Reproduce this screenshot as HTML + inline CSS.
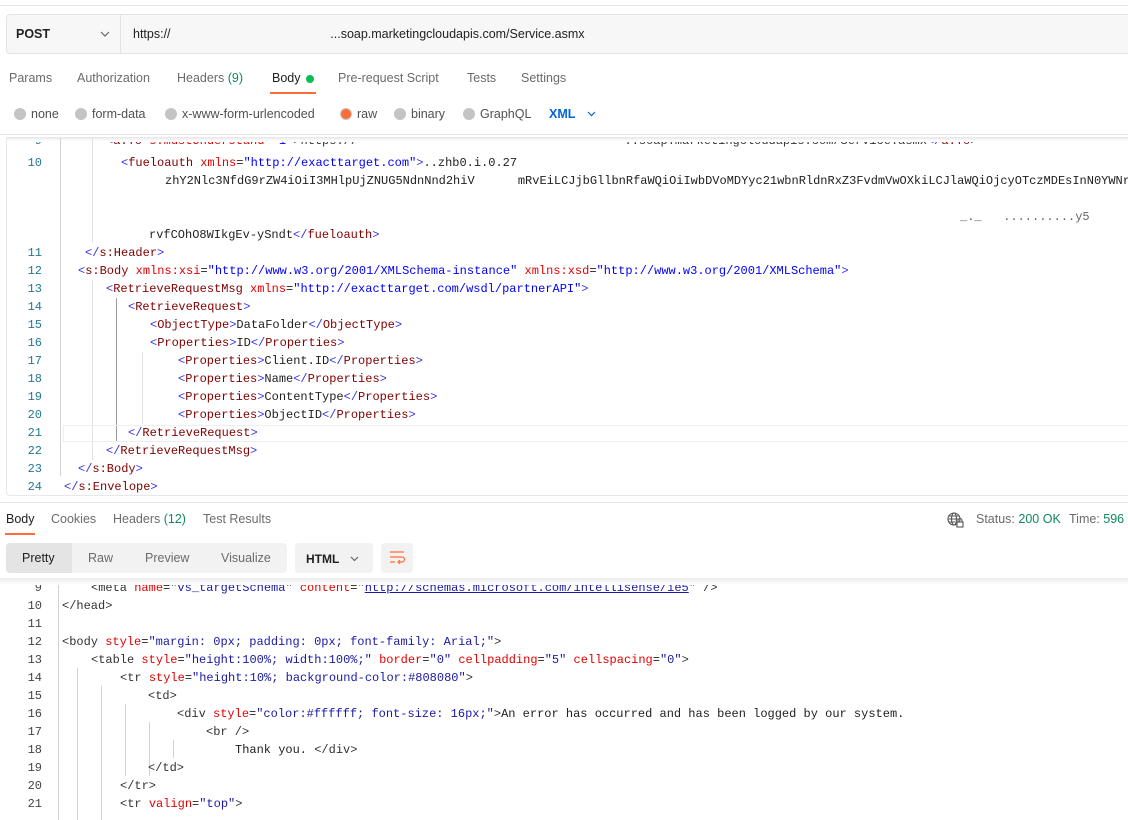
<!DOCTYPE html>
<html><head><meta charset="utf-8"><style>
*{box-sizing:border-box;margin:0;padding:0}
body{width:1128px;height:820px;overflow:hidden;background:#fff;font-family:"Liberation Sans",Arial,sans-serif;font-size:12.5px;color:#212121;position:relative}
.a{position:absolute;white-space:pre}
.m{font-family:"Liberation Mono",monospace;font-size:12px;line-height:18px}
.ln{position:absolute;width:36px;text-align:right;font-family:"Liberation Mono",monospace;font-size:12px;line-height:18px}
.rq .ln{color:#237893}
.rs .ln{color:#444}
.b{color:#3535e0}.t{color:#800000}.at{color:#e50000}.v{color:#0000ff}
.rt{color:#333}.ra{color:#e50000}.rv{color:#1a1aa6}
.tab{position:absolute;top:71px;color:#6b6b6b;font-size:12.5px}
.rad{position:absolute;top:108px;width:12px;height:12px;border-radius:50%;background:#c4c4c4}
.rl{position:absolute;top:107px;color:#505050}
.vg{position:absolute;width:1px;background:#d4d4d4}
</style></head><body>
<div class="a" style="left:0;top:5px;width:1128px;height:1px;background:#e6e6e6"></div>
<!-- URL bar -->
<div class="a" style="left:6px;top:14px;width:1122px;height:40px;background:#f7f7f7;border:1px solid #e3e3e3;border-right:none;border-radius:4px 0 0 4px"></div>
<div class="a" style="left:120px;top:15px;width:1px;height:38px;background:#e3e3e3"></div>
<div class="a" style="left:16px;top:27px;font-weight:bold;font-size:12.5px;color:#212121">POST</div>
<svg class="a" style="left:100px;top:31px" width="10" height="7" viewBox="0 0 10 7"><path d="M1 1l4 4 4-4" stroke="#666" fill="none" stroke-width="1.2"/></svg>
<div class="a" style="left:133px;top:27px;color:#212121;font-size:12.5px">https://                                              ...soap.marketingcloudapis.com/Service.asmx</div>
<!-- tabs -->
<div class="tab" style="left:9px">Params</div>
<div class="tab" style="left:77px">Authorization</div>
<div class="tab" style="left:177px">Headers <span style="color:#0f8a5a">(9)</span></div>
<div class="tab" style="left:272px;color:#212121">Body</div>
<div class="a" style="left:306px;top:75px;width:8px;height:8px;border-radius:50%;background:#0cbb52"></div>
<div class="a" style="left:270px;top:92px;width:46px;height:2px;background:#ff6c37"></div>
<div class="tab" style="left:338px">Pre-request Script</div>
<div class="tab" style="left:467px">Tests</div>
<div class="tab" style="left:521px">Settings</div>
<!-- radios -->
<div class="rad" style="left:14px"></div><div class="rl" style="left:31px">none</div>
<div class="rad" style="left:75px"></div><div class="rl" style="left:92px">form-data</div>
<div class="rad" style="left:165px"></div><div class="rl" style="left:182px">x-www-form-urlencoded</div>
<div class="rad" style="left:340px;background:#ff6c37;border:1.5px solid #c4c4c4"></div><div class="rl" style="left:357px">raw</div>
<div class="rad" style="left:394px"></div><div class="rl" style="left:411px">binary</div>
<div class="rad" style="left:463px"></div><div class="rl" style="left:480px">GraphQL</div>
<div class="rl" style="left:549px;color:#0265d2;font-weight:bold">XML</div>
<svg class="a" style="left:587px;top:111px" width="9" height="6" viewBox="0 0 9 6"><path d="M1 1l3.5 3.5 3.5-3.5" stroke="#0265d2" fill="none" stroke-width="1.2"/></svg>
<div class="a" style="left:0;top:134px;width:1128px;height:1px;background:#e8e8e8"></div>
<!-- request editor -->
<div class="rq">
<div class="ln" style="left:6px;top:132px">9</div>
<div class="a m" style="left:106px;top:132px;color:#333"><span class="b">&lt;</span><span class="t">a:To</span> <span class="at">s:mustUnderstand</span>=<span class="v">"1"</span><span class="b">&gt;</span>https://                                     ..soap.marketingcloudapis.com/Service.asmx<span class="b">&lt;/</span><span class="t">a:To</span><span class="b">&gt;</span></div>
<div class="a" style="left:0;top:135px;width:1128px;height:7px;background:#fff"></div>
<div class="a" style="left:6px;top:137px;width:1122px;height:359px;border-left:1px solid #e8e8e8;border-bottom:1px solid #e8e8e8;border-radius:0 0 0 4px;overflow:hidden">
<div class="a" style="left:0;top:0;width:1122px;height:4px;background:linear-gradient(#e6e6e6,#fff)"></div>
</div>
<div class="vg" style="left:60px;top:138px;height:338px"></div>
<div class="vg" style="left:92px;top:138px;height:105px;background:#e2e2e2"></div>
<div class="vg" style="left:92px;top:280px;height:180px;background:#e2e2e2"></div>
<div class="vg" style="left:116px;top:298px;height:144px;background:#9a9a9a"></div>
<div class="vg" style="left:142px;top:352px;height:72px;background:#e2e2e2"></div>
<div class="a" style="left:63px;top:425px;width:1065px;height:17px;border:1px solid #eee;border-right:none"></div>
<div class="ln" style="left:6px;top:154px">10</div>
<div class="a m" style="left:121px;top:154px"><span class="b">&lt;</span><span class="t">fueloauth</span> <span class="at">xmlns</span>=<span class="v">"http://exacttarget.com"</span><span class="b">&gt;</span>..zhb0.i.0.27</div>
<div class="a m" style="left:165px;top:172px">zhY2Nlc3NfdG9rZW4iOiI3MHlpUjZNUG5NdnNnd2hiV      mRvEiLCJjbGllbnRfaWQiOiIwbDVoMDYyc21wbnRldnRxZ3FvdmVwOXkiLCJlaWQiOjcyOTczMDEsInN0YWNr</div>
<div class="a m" style="left:960px;top:208px;color:#666">_._   ..........y5</div>
<div class="a m" style="left:149px;top:226px">rvfCOhO8WIkgEv-ySndt<span class="b">&lt;/</span><span class="t">fueloauth</span><span class="b">&gt;</span></div>
<div class="ln" style="left:6px;top:244px">11</div>
<div class="a m" style="left:85px;top:244px"><span class="b">&lt;/</span><span class="t">s:Header</span><span class="b">&gt;</span></div>
<div class="ln" style="left:6px;top:262px">12</div>
<div class="a m" style="left:78px;top:262px"><span class="b">&lt;</span><span class="t">s:Body</span> <span class="at">xmlns:xsi</span>=<span class="v">"http://www.w3.org/2001/XMLSchema-instance"</span> <span class="at">xmlns:xsd</span>=<span class="v">"http://www.w3.org/2001/XMLSchema"</span><span class="b">&gt;</span></div>
<div class="ln" style="left:6px;top:280px">13</div>
<div class="a m" style="left:106px;top:280px"><span class="b">&lt;</span><span class="t">RetrieveRequestMsg</span> <span class="at">xmlns</span>=<span class="v">"http://exacttarget.com/wsdl/partnerAPI"</span><span class="b">&gt;</span></div>
<div class="ln" style="left:6px;top:298px">14</div>
<div class="a m" style="left:128px;top:298px"><span class="b">&lt;</span><span class="t">RetrieveRequest</span><span class="b">&gt;</span></div>
<div class="ln" style="left:6px;top:316px">15</div>
<div class="a m" style="left:150px;top:316px"><span class="b">&lt;</span><span class="t">ObjectType</span><span class="b">&gt;</span>DataFolder<span class="b">&lt;/</span><span class="t">ObjectType</span><span class="b">&gt;</span></div>
<div class="ln" style="left:6px;top:334px">16</div>
<div class="a m" style="left:150px;top:334px"><span class="b">&lt;</span><span class="t">Properties</span><span class="b">&gt;</span>ID<span class="b">&lt;/</span><span class="t">Properties</span><span class="b">&gt;</span></div>
<div class="ln" style="left:6px;top:352px">17</div>
<div class="a m" style="left:178px;top:352px"><span class="b">&lt;</span><span class="t">Properties</span><span class="b">&gt;</span>Client.ID<span class="b">&lt;/</span><span class="t">Properties</span><span class="b">&gt;</span></div>
<div class="ln" style="left:6px;top:370px">18</div>
<div class="a m" style="left:178px;top:370px"><span class="b">&lt;</span><span class="t">Properties</span><span class="b">&gt;</span>Name<span class="b">&lt;/</span><span class="t">Properties</span><span class="b">&gt;</span></div>
<div class="ln" style="left:6px;top:388px">19</div>
<div class="a m" style="left:178px;top:388px"><span class="b">&lt;</span><span class="t">Properties</span><span class="b">&gt;</span>ContentType<span class="b">&lt;/</span><span class="t">Properties</span><span class="b">&gt;</span></div>
<div class="ln" style="left:6px;top:406px">20</div>
<div class="a m" style="left:178px;top:406px"><span class="b">&lt;</span><span class="t">Properties</span><span class="b">&gt;</span>ObjectID<span class="b">&lt;/</span><span class="t">Properties</span><span class="b">&gt;</span></div>
<div class="ln" style="left:6px;top:424px">21</div>
<div class="a m" style="left:128px;top:424px"><span class="b">&lt;/</span><span class="t">RetrieveRequest</span><span class="b">&gt;</span></div>
<div class="ln" style="left:6px;top:442px">22</div>
<div class="a m" style="left:106px;top:442px"><span class="b">&lt;/</span><span class="t">RetrieveRequestMsg</span><span class="b">&gt;</span></div>
<div class="ln" style="left:6px;top:460px">23</div>
<div class="a m" style="left:78px;top:460px"><span class="b">&lt;/</span><span class="t">s:Body</span><span class="b">&gt;</span></div>
<div class="ln" style="left:6px;top:478px">24</div>
<div class="a m" style="left:64px;top:478px"><span class="b">&lt;/</span><span class="t">s:Envelope</span><span class="b">&gt;</span></div>
</div>
<div class="a" style="left:0;top:502px;width:1128px;height:1px;background:#e6e6e6"></div>
<!-- response header -->
<div class="a" style="left:6px;top:512px;color:#212121">Body</div>
<div class="a" style="left:5px;top:533px;width:30px;height:2px;background:#ff6c37"></div>
<div class="a" style="left:51px;top:512px;color:#6b6b6b">Cookies</div>
<div class="a" style="left:113px;top:512px;color:#6b6b6b">Headers <span style="color:#0f8a5a">(12)</span></div>
<div class="a" style="left:203px;top:512px;color:#6b6b6b">Test Results</div>
<svg class="a" style="left:947px;top:512px" width="18" height="16" viewBox="0 0 18 16"><g fill="none" stroke="#555" stroke-width="1.1"><circle cx="7" cy="7" r="6"/><ellipse cx="7" cy="7" rx="2.5" ry="6"/><path d="M1 7h12M2 4h10M2 10h6"/><rect x="10" y="10" width="6" height="5" fill="#fff"/><path d="M11 10V8.5a2 2 0 014 0V10"/></g></svg>
<div class="a" style="left:976px;top:512px;color:#6b6b6b">Status: <span style="color:#0f8a5a">200 OK</span></div>
<div class="a" style="left:1069px;top:512px;color:#6b6b6b">Time: <span style="color:#0f8a5a">596 ms</span></div>
<!-- buttons -->
<div class="a" style="left:6px;top:543px;width:281px;height:30px;background:#f2f2f2;border-radius:4px"></div>
<div class="a" style="left:6px;top:543px;width:66px;height:30px;background:#e4e4e4;border-radius:4px 0 0 4px"></div>
<div class="a" style="left:22px;top:551px;color:#212121">Pretty</div>
<div class="a" style="left:88px;top:551px;color:#6b6b6b">Raw</div>
<div class="a" style="left:145px;top:551px;color:#6b6b6b">Preview</div>
<div class="a" style="left:221px;top:551px;color:#6b6b6b">Visualize</div>
<div class="a" style="left:295px;top:543px;width:78px;height:30px;background:#f2f2f2;border-radius:4px"></div>
<div class="a" style="left:306px;top:552px;color:#212121;font-weight:bold;font-size:12px">HTML</div>
<svg class="a" style="left:350px;top:556px" width="9" height="6" viewBox="0 0 9 6"><path d="M1 1l3.5 3.5 3.5-3.5" stroke="#666" fill="none" stroke-width="1.2"/></svg>
<div class="a" style="left:381px;top:543px;width:32px;height:30px;background:#f2f2f2;border-radius:4px"></div>
<svg class="a" style="left:388px;top:550px" width="18" height="16" viewBox="0 0 18 16"><g fill="none" stroke="#ff6c37" stroke-width="1.2"><path d="M2 2h14M2 7h12a2.5 2.5 0 010 5h-4M2 12h5"/><path d="M12 10l-2 2 2 2"/></g></svg>
<!-- response editor -->
<div class="rs">
<div class="vg" style="left:58px;top:583px;height:237px"></div>
<div class="vg" style="left:77px;top:668px;height:152px"></div>
<div class="vg" style="left:101px;top:686px;height:134px"></div>
<div class="vg" style="left:125px;top:704px;height:72px"></div>
<div class="vg" style="left:149px;top:722px;height:54px"></div>
<div class="vg" style="left:173px;top:740px;height:18px"></div>
<div class="ln" style="left:6px;top:579px">9</div>
<div class="a m" style="left:91px;top:579px"><span class="rt">&lt;meta</span> <span class="ra">name</span>=<span class="rv">"vs_targetSchema"</span> <span class="ra">content</span>=<span class="rv">"<u>http://schemas.microsoft.com/intellisense/ie5</u>"</span> <span class="rt">/&gt;</span></div>
<div class="a" style="left:0;top:578px;width:1128px;height:7px;background:linear-gradient(#ececec,#fff)"></div>
<div class="ln" style="left:6px;top:597px">10</div>
<div class="a m rt" style="left:62px;top:597px">&lt;/head&gt;</div>
<div class="ln" style="left:6px;top:615px">11</div>
<div class="ln" style="left:6px;top:633px">12</div>
<div class="a m" style="left:62px;top:633px"><span class="rt">&lt;body</span> <span class="ra">style</span>=<span class="rv">"margin: 0px; padding: 0px; font-family: Arial;"</span><span class="rt">&gt;</span></div>
<div class="ln" style="left:6px;top:651px">13</div>
<div class="a m" style="left:91px;top:651px"><span class="rt">&lt;table</span> <span class="ra">style</span>=<span class="rv">"height:100%; width:100%;"</span> <span class="ra">border</span>=<span class="rv">"0"</span> <span class="ra">cellpadding</span>=<span class="rv">"5"</span> <span class="ra">cellspacing</span>=<span class="rv">"0"</span><span class="rt">&gt;</span></div>
<div class="ln" style="left:6px;top:669px">14</div>
<div class="a m" style="left:120px;top:669px"><span class="rt">&lt;tr</span> <span class="ra">style</span>=<span class="rv">"height:10%; background-color:#808080"</span><span class="rt">&gt;</span></div>
<div class="ln" style="left:6px;top:687px">15</div>
<div class="a m rt" style="left:148px;top:687px">&lt;td&gt;</div>
<div class="ln" style="left:6px;top:705px">16</div>
<div class="a m" style="left:177px;top:705px"><span class="rt">&lt;div</span> <span class="ra">style</span>=<span class="rv">"color:#ffffff; font-size: 16px;"</span><span class="rt">&gt;</span>An error has occurred and has been logged by our system.</div>
<div class="ln" style="left:6px;top:723px">17</div>
<div class="a m rt" style="left:206px;top:723px">&lt;br /&gt;</div>
<div class="ln" style="left:6px;top:741px">18</div>
<div class="a m" style="left:235px;top:741px">Thank you. <span class="rt">&lt;/div&gt;</span></div>
<div class="ln" style="left:6px;top:759px">19</div>
<div class="a m rt" style="left:148px;top:759px">&lt;/td&gt;</div>
<div class="ln" style="left:6px;top:777px">20</div>
<div class="a m rt" style="left:120px;top:777px">&lt;/tr&gt;</div>
<div class="ln" style="left:6px;top:795px">21</div>
<div class="a m" style="left:120px;top:795px"><span class="rt">&lt;tr</span> <span class="ra">valign</span>=<span class="rv">"top"</span><span class="rt">&gt;</span></div>
</div>
</body></html>
